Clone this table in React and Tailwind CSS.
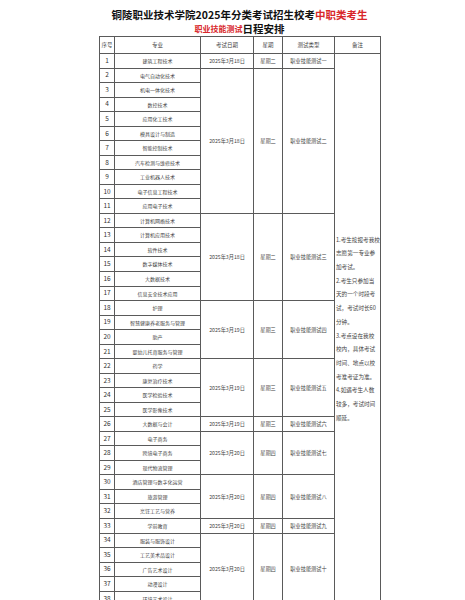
import React from "react";

const groups = [
  { date: "2025年3月18日", day: "星期二", test: "职业技能测试一", majors: ["建筑工程技术"] },
  {
    date: "2025年3月18日",
    day: "星期二",
    test: "职业技能测试二",
    majors: [
      "电气自动化技术",
      "机电一体化技术",
      "数控技术",
      "应用化工技术",
      "模具设计与制造",
      "智能控制技术",
      "汽车检测与维修技术",
      "工业机器人技术",
      "电子信息工程技术",
      "应用电子技术",
    ],
  },
  {
    date: "2025年3月18日",
    day: "星期二",
    test: "职业技能测试三",
    majors: ["计算机网络技术", "计算机应用技术", "软件技术", "数字媒体技术", "大数据技术", "信息安全技术应用"],
  },
  {
    date: "2025年3月19日",
    day: "星期三",
    test: "职业技能测试四",
    majors: ["护理", "智慧健康养老服务与管理", "助产", "婴幼儿托育服务与管理"],
  },
  {
    date: "2025年3月19日",
    day: "星期三",
    test: "职业技能测试五",
    majors: ["药学", "康复治疗技术", "医学检验技术", "医学影像技术"],
  },
  { date: "2025年3月19日", day: "星期三", test: "职业技能测试六", majors: ["大数据与会计"] },
  {
    date: "2025年3月20日",
    day: "星期四",
    test: "职业技能测试七",
    majors: ["电子商务", "跨境电子商务", "现代物流管理"],
  },
  {
    date: "2025年3月20日",
    day: "星期四",
    test: "职业技能测试八",
    majors: ["酒店管理与数字化运营", "旅游管理", "烹饪工艺与营养"],
  },
  { date: "2025年3月20日", day: "星期四", test: "职业技能测试九", majors: ["学前教育"] },
  {
    date: "2025年3月20日",
    day: "星期四",
    test: "职业技能测试十",
    majors: ["服装与服饰设计", "工艺美术品设计", "广告艺术设计", "动漫设计", "环境艺术设计"],
  },
];

const notes = [
  "1.考生按报考我校",
  "志愿第一专业参",
  "加考试。",
  "2.考生只参加当",
  "天的一个时段考",
  "试，考试时长60",
  "分钟。",
  "3.考点设在我校",
  "校内，具体考试",
  "时间、地点以校",
  "考准考证为准。",
  "4.如遇考生人数",
  "较多，考试时间",
  "顺延。",
];

const cell = "border border-[#5a5a5a] text-center align-middle p-0";

const App = () => {
  let n = 0;
  const rows = [];
  groups.forEach((g, gi) => {
    g.majors.forEach((m, mi) => {
      n += 1;
      rows.push(
        <tr key={n} className="h-[14.54px]">
          <td className={`${cell} text-[6.5px] text-[#333]`}>{n}</td>
          <td className={`${cell} text-[5px] text-[#444]`}>{m}</td>
          {mi === 0 && (
            <>
              <td rowSpan={g.majors.length} className={`${cell} text-[5.2px] text-[#444]`}>
                {g.date}
              </td>
              <td rowSpan={g.majors.length} className={`${cell} text-[5.2px] text-[#444]`}>
                {g.day}
              </td>
              <td rowSpan={g.majors.length} className={`${cell} text-[5.2px] text-[#444]`}>
                {g.test}
              </td>
            </>
          )}
          {gi === 0 && mi === 0 && (
            <td
              rowSpan={38}
              className={`${cell} text-left pl-[1px] text-[5.6px] leading-[13.7px] text-[#444] whitespace-nowrap`}
            >
              {notes.map((l) => (
                <div key={l}>{l}</div>
              ))}
            </td>
          )}
        </tr>
      );
    });
  });

  return (
    <div className="w-[465px] h-[600px] overflow-hidden bg-white font-['Noto_Sans_CJK_SC','Noto_Sans',sans-serif]">
      <div className="ml-[99px] w-[281px] pt-[8px]">
        <div className="h-[14px] text-center font-bold text-[10.5px] leading-[14px] text-[#111] whitespace-nowrap">
          铜陵职业技术学院2025年分类考试招生校考<span className="text-[#d8262a]">中职类考生</span>
        </div>
        <div className="h-[14px] flex justify-center items-center font-bold text-[#111] whitespace-nowrap">
          <span className="text-[8px] leading-none text-[#d8262a]">职业技能测试</span>
          <span className="text-[10.5px] leading-none">日程安排</span>
        </div>
        <table className="w-[281px] table-fixed border-collapse">
          <colgroup>
            <col className="w-[15px]" />
            <col className="w-[86px]" />
            <col className="w-[53px]" />
            <col className="w-[29px]" />
            <col className="w-[52px]" />
            <col className="w-[46px]" />
          </colgroup>
          <thead>
            <tr className="h-[17px]">
              {["序号", "专业", "考试日期", "星期", "测试类型", "备注"].map((h) => (
                <th key={h} className={`${cell} font-normal text-[5.5px] text-[#444]`}>
                  {h}
                </th>
              ))}
            </tr>
          </thead>
          <tbody>{rows}</tbody>
        </table>
      </div>
    </div>
  );
};

export default App;
